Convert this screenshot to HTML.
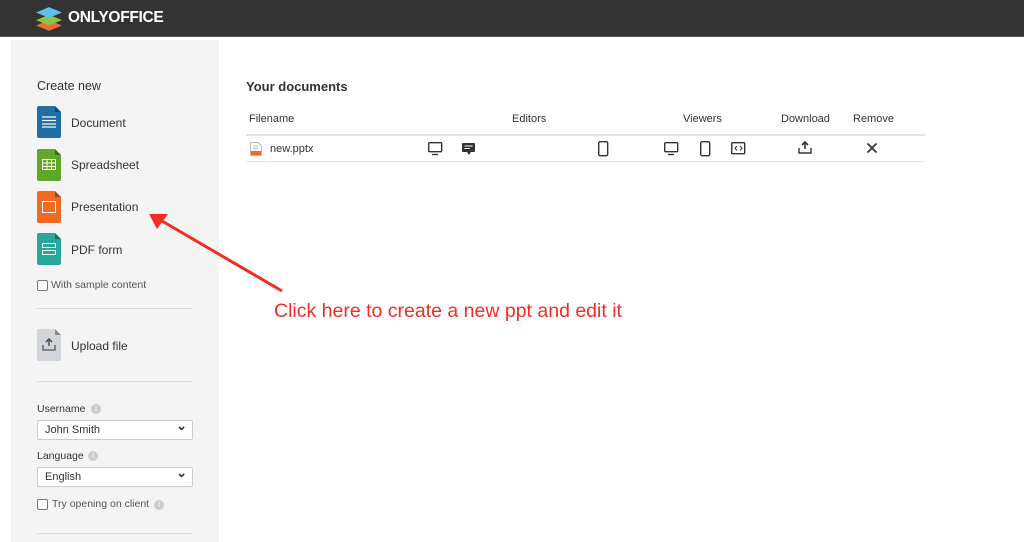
<!DOCTYPE html>
<html><head><meta charset="utf-8"><style>
*{box-sizing:border-box;margin:0;padding:0}
body{width:1024px;height:542px;overflow:hidden;background:#fff;font-family:"Liberation Sans",sans-serif;color:#333;position:relative}
.hdr{position:absolute;left:0;top:0;width:1024px;height:37px;background:#333;border-bottom:1px solid #555}
.logo{position:absolute;left:68px;top:9px;color:#fff;font-weight:bold;font-size:15.5px;letter-spacing:-0.3px}
.side{position:absolute;left:11px;top:40px;width:208px;height:502px;background:#f4f4f4}
.t{position:absolute;font-size:12px;color:#333}
.ic{position:absolute;left:37px;width:24px;height:32px;border-radius:2px}
.ic:after{content:"";position:absolute;right:0;top:0;border-style:solid;border-width:0 6px 6px 0;border-color:#f4f4f4 #f4f4f4 rgba(0,0,0,.35) rgba(0,0,0,.35)}
.hr{position:absolute;left:37px;width:156px;height:1px;background:#ddd}
.sel{position:absolute;left:37px;width:156px;height:20px;background:#fff;border:1px solid #ccc;border-radius:2px;font-size:11px;padding:3px 7px}
.sel:after{content:"⌄";position:absolute;right:5px;top:-3px;font-size:13px;font-weight:bold}
.cb{position:absolute;left:37px;width:11px;height:11px;border:1px solid #777;border-radius:2px;background:#fff}
.info{position:absolute;width:10px;height:10px;border-radius:50%;background:#ccc;color:#fff;font-size:8px;text-align:center;line-height:10px}
.th{position:absolute;top:113px;font-size:11px;color:#333}
</style></head><body>
<div class="hdr">
<svg style="position:absolute;left:35px;top:6px" width="28" height="26" viewBox="0 0 26 24">
<path d="M13 13 L25 18 L13 23 L1 18Z" fill="#f26b3a"/>
<path d="M13 8 L25 13 L13 18 L1 13Z" fill="#8bc53f"/>
<path d="M13 1 L25 6 L13 11 L1 6Z" fill="#5bc0eb"/>
</svg>
<div class="logo">ONLYOFFICE</div>
</div>
<div class="side"></div>
<div class="t" style="left:37px;top:79px;font-size:12.5px">Create new</div>

<div class="ic" style="top:106px;background:#1f6ea6"></div>
<svg style="position:absolute;left:42px;top:116px" width="14" height="12"><g stroke="#fff" stroke-width="1.2"><line x1="0" y1="1" x2="14" y2="1"/><line x1="0" y1="4.5" x2="14" y2="4.5"/><line x1="0" y1="8" x2="14" y2="8"/><line x1="0" y1="11" x2="14" y2="11"/></g></svg>
<div class="t" style="left:71px;top:116px">Document</div>

<div class="ic" style="top:149px;background:#5fa629"></div>
<svg style="position:absolute;left:42px;top:159px" width="14" height="11"><rect x="0.5" y="0.5" width="13" height="10" fill="none" stroke="#fff"/><g stroke="#fff"><line x1="0" y1="4" x2="14" y2="4"/><line x1="0" y1="7.5" x2="14" y2="7.5"/><line x1="5" y1="0" x2="5" y2="11"/><line x1="9.5" y1="0" x2="9.5" y2="11"/></g></svg>
<div class="t" style="left:71px;top:158px">Spreadsheet</div>

<div class="ic" style="top:191px;background:#f26a22"></div>
<div style="position:absolute;left:42px;top:201px;width:14px;height:12px;border:1.5px solid #fff"></div>
<div class="t" style="left:71px;top:200px">Presentation</div>

<div class="ic" style="top:233px;background:#2aa79b"></div>
<div style="position:absolute;left:42px;top:243px;width:14px;height:5px;border:1.3px solid #fff"></div>
<div style="position:absolute;left:42px;top:250px;width:14px;height:5px;border:1.3px solid #fff"></div>
<div class="t" style="left:71px;top:243px">PDF form</div>

<div class="cb" style="top:280px"></div>
<div class="t" style="left:51px;top:279px;font-size:10.5px;color:#555">With sample content</div>
<div class="hr" style="top:308px"></div>

<div class="ic" style="top:329px;background:#d2d6db"></div>
<svg style="position:absolute;left:41px;top:338px" width="16" height="14"><path d="M8 1 L8 8 M5 4 L8 1 L11 4" stroke="#555" stroke-width="1.6" fill="none"/><path d="M2 7 L2 12 L14 12 L14 7" stroke="#555" stroke-width="1.3" fill="none"/></svg>
<div class="t" style="left:71px;top:339px">Upload file</div>
<div class="hr" style="top:381px"></div>

<div class="t" style="left:37px;top:403px;font-size:10.5px">Username</div>
<div class="info" style="left:91px;top:404px">i</div>
<div class="sel" style="top:420px">John Smith</div>
<div class="t" style="left:37px;top:450px;font-size:10.5px">Language</div>
<div class="info" style="left:88px;top:451px">i</div>
<div class="sel" style="top:467px">English</div>
<div class="cb" style="top:499px"></div>
<div class="t" style="left:52px;top:498px;font-size:10.5px;color:#555">Try opening on client</div>
<div class="info" style="left:154px;top:500px">i</div>
<div class="hr" style="top:533px"></div>

<div class="t" style="left:246px;top:79px;font-size:13px;font-weight:bold">Your documents</div>
<div class="th" style="left:249px">Filename</div>
<div class="th" style="left:512px">Editors</div>
<div class="th" style="left:683px">Viewers</div>
<div class="th" style="left:781px">Download</div>
<div class="th" style="left:853px">Remove</div>
<div style="position:absolute;left:246px;top:134px;width:679px;height:2px;background:#e2e2e2"></div>
<div style="position:absolute;left:246px;top:161px;width:679px;height:1px;background:#e8e8e8"></div>
<svg style="position:absolute;left:250px;top:142px" width="12" height="14"><path d="M0.5 0.5 H8 L11.5 4 V13.5 H0.5Z" fill="#fff" stroke="#bbb"/><rect x="1" y="9" width="10" height="4" fill="#f26a22"/><line x1="3" y1="4" x2="8" y2="4" stroke="#bbb"/><line x1="3" y1="6.5" x2="8" y2="6.5" stroke="#bbb"/></svg>
<div class="t" style="left:270px;top:143px;font-size:11px">new.pptx</div>
<svg style="position:absolute;left:0;top:0" width="1024" height="542">
<g fill="none" stroke="#333" stroke-width="1.4">
<rect x="428.7" y="142.7" width="13" height="9" rx="1"/><line x1="432" y1="154.5" x2="438" y2="154.5"/>
<rect x="664.7" y="142.7" width="13" height="9" rx="1"/><line x1="668" y1="154.5" x2="674" y2="154.5"/>
<rect x="598.7" y="141.7" width="9" height="14" rx="1.5"/>
<rect x="700.7" y="141.7" width="9" height="14" rx="1.5"/>
<rect x="731.7" y="142.7" width="13" height="11" rx="1"/>
<path d="M737 146 L735 148.2 L737 150.5 M740 146 L742 148.2 L740 150.5" stroke-width="1"/>
<path d="M805 142 L805 149 M802 145 L805 142 L808 145" stroke-width="1.6"/>
<path d="M799 148 V153 H811 V148" stroke-width="1.4"/>
<path d="M867.5 143.5 L876.5 152.5 M876.5 143.5 L867.5 152.5" stroke-width="1.8"/>
</g>
<rect x="462" y="143" width="13" height="9" rx="1" fill="#333"/>
<path d="M467 152 L469 155 L471 152Z" fill="#333"/>
<g stroke="#fff" stroke-width="1"><line x1="464.5" y1="146" x2="472.5" y2="146"/><line x1="464.5" y1="148.5" x2="470" y2="148.5"/></g>
<line x1="282" y1="291" x2="162" y2="221" stroke="#f22d24" stroke-width="3"/>
<path d="M149 214 L168 214 L157 229Z" fill="#f22d24"/>
</svg>
<div class="t" style="left:274px;top:300px;font-size:19.5px;color:#f22d24">Click here to create a new ppt and edit it</div>
</body></html>
